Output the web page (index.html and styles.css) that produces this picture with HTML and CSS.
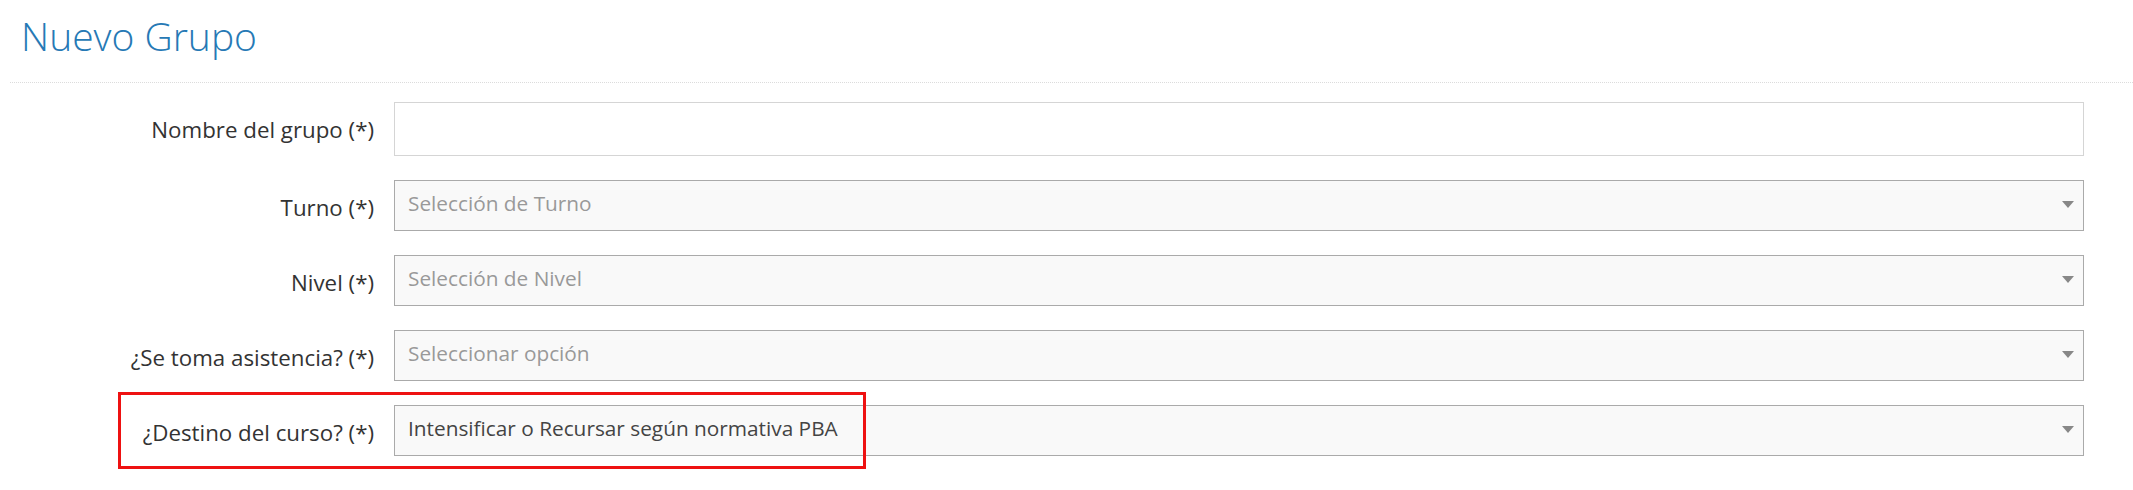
FILE: index.html
```html
<!DOCTYPE html>
<html lang="es">
<head>
<meta charset="utf-8">
<title>Nuevo Grupo</title>
<link rel="stylesheet" href="styles.css">
</head>
<body>
<div class="page">
  <div class="page-header">
    <h1 class="page-title">Nuevo Grupo</h1>
  </div>
  <form class="form">
    <div class="form-row">
      <label class="control-label">Nombre del grupo (*)</label>
      <div class="field"><div class="text-input"></div></div>
    </div>
    <div class="form-row">
      <label class="control-label">Turno (*)</label>
      <div class="field"><div class="select"><span class="placeholder">Selección de Turno</span><span class="arrow"></span></div></div>
    </div>
    <div class="form-row">
      <label class="control-label">Nivel (*)</label>
      <div class="field"><div class="select"><span class="placeholder">Selección de Nivel</span><span class="arrow"></span></div></div>
    </div>
    <div class="form-row">
      <label class="control-label">¿Se toma asistencia? (*)</label>
      <div class="field"><div class="select"><span class="placeholder">Seleccionar opción</span><span class="arrow"></span></div></div>
    </div>
    <div class="form-row highlighted">
      <label class="control-label">¿Destino del curso? (*)</label>
      <div class="field"><div class="select"><span class="value">Intensificar o Recursar según normativa PBA</span><span class="arrow"></span></div></div>
      <div class="annotation"></div>
    </div>
  </form>
</div>
</body>
</html>
```

FILE: styles.css
```css
html, body {
  margin: 0;
  padding: 0;
  background: #ffffff;
}

body {
  font-family: "Open Sans", "Liberation Sans", sans-serif;
  color: #333333;
  width: 2133px;
  min-height: 490px;
}

.page {
  position: relative;
  min-height: 490px;
}

.page-header {
  margin-left: 10px;
  padding: 9px 0 20px 11px;
  border-bottom: 1px dotted #dcdcdc;
}

.page-title {
  margin: 0;
  font-size: 39px;
  line-height: 53px;
  font-weight: 300;
  color: #2679b5;
}

.form {
  padding: 19px 49px 0 0;
  display: flex;
  flex-direction: column;
  gap: 24px;
}

.form-row {
  position: relative;
  display: grid;
  grid-template-columns: 374px 1fr;
  column-gap: 20px;
}

.control-label {
  text-align: right;
  font-size: 22.3px;
  line-height: 28px;
  padding-top: 14px;
  color: #333333;
  white-space: nowrap;
}

.text-input {
  box-sizing: border-box;
  height: 54px;
  border: 1px solid #d5d5d5;
  background: #ffffff;
}

.select {
  box-sizing: border-box;
  height: 51px;
  border: 1px solid #aaaaaa;
  background: #f9f9f9;
  padding: 8px 0 0 13px;
  font-size: 20.8px;
  line-height: 28px;
  position: relative;
}

.placeholder {
  color: #999999;
}

.value {
  color: #444444;
}

.arrow {
  position: absolute;
  right: 9px;
  top: 20px;
  width: 0;
  height: 0;
  border-left: 6px solid transparent;
  border-right: 6px solid transparent;
  border-top: 7px solid #888888;
}

.annotation {
  position: absolute;
  left: 118px;
  top: -13px;
  width: 748px;
  height: 77px;
  box-sizing: border-box;
  border: 3px solid #ee1111;
  pointer-events: none;
}
```
